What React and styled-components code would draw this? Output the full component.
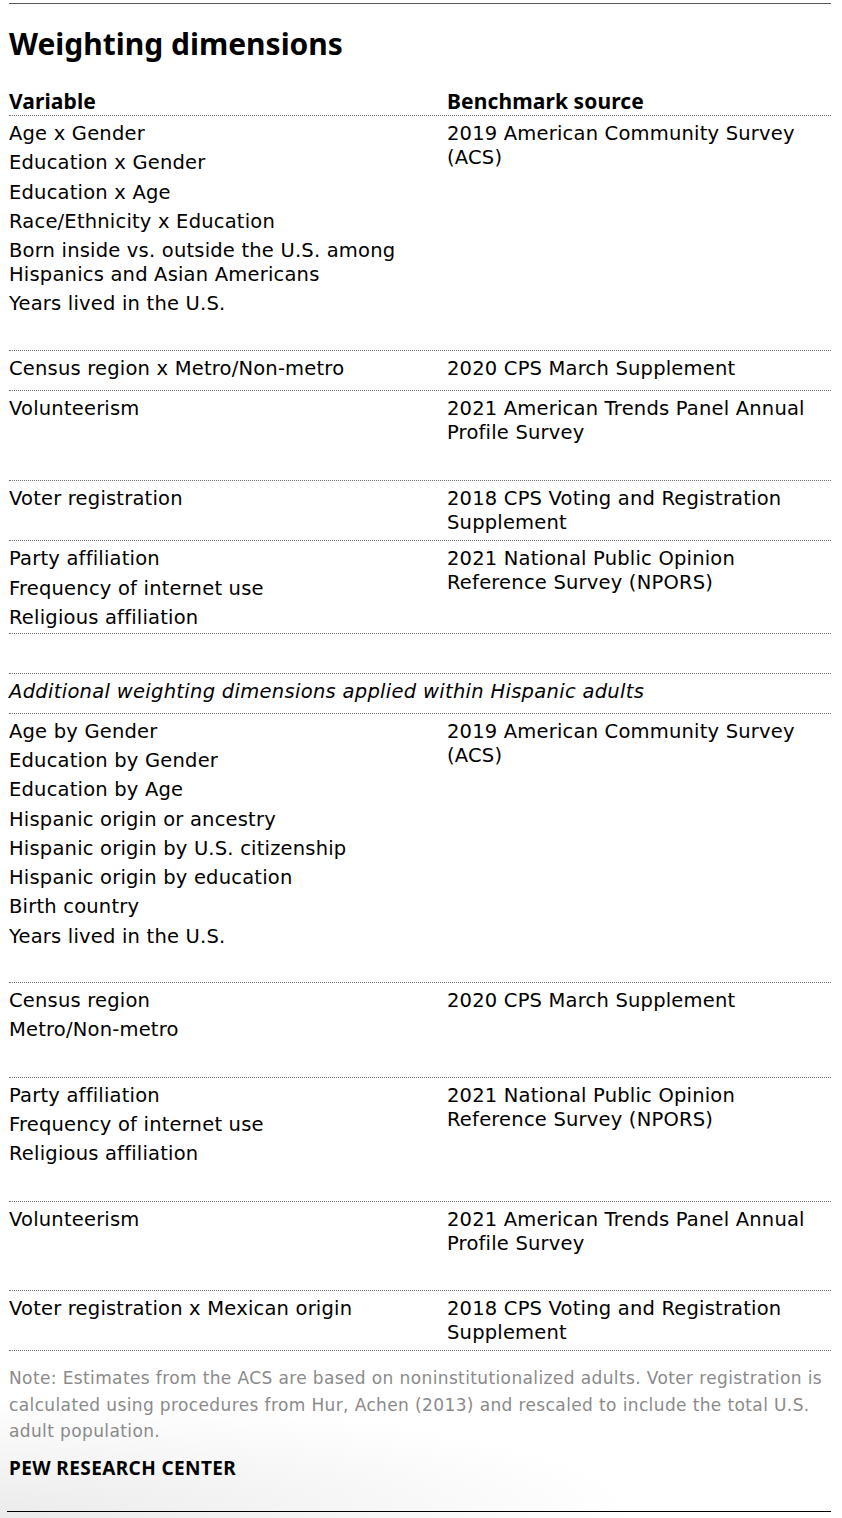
import React from "react";
import styled, { createGlobalStyle } from "styled-components";

const GlobalStyle = createGlobalStyle`
  html, body {
    margin: 0;
    padding: 0;
    background: #fff;
  }
  body {
    font-family: "Noto Sans", "Liberation Sans", Arial, sans-serif;
    color: #000;
  }
`;

const bodyFont = `"DejaVu Sans", "Noto Sans", sans-serif`;

const Page = styled.div`
  box-sizing: border-box;
  min-height: 1518px;
  padding: 3px 11px 0 9px;
  background:
    radial-gradient(ellipse 640px 120px at 0% 100%, #ebebeb 0%, rgba(255, 255, 255, 0) 100%),
    #fff;
`;

const Figure = styled.section`
  border-top: 1px solid #5a5a5a;
`;

const Title = styled.h1`
  margin: 22px 0 0;
  font-size: 30px;
  line-height: 36px;
  font-weight: 700;
`;

const Grid = styled.div`
  display: grid;
  grid-template-columns: 438px 1fr;
  border-bottom: 1px dotted #6f6f6f;
`;

const HeaderRow = styled(Grid)`
  margin-top: 27px;
  padding-bottom: 2px;
`;

const HeadCell = styled.div`
  font-size: 21px;
  line-height: 24px;
  font-weight: 700;
  letter-spacing: 0.1px;
`;

const Row = styled(Grid)`
  padding: 6px 0 ${(p) => p.$pb}px;
`;

const Cell = styled.div`
  display: flex;
  flex-direction: column;
  gap: 5.25px;
`;

const Item = styled.div`
  font-family: ${bodyFont};
  font-size: 19.5px;
  line-height: 24px;
  letter-spacing: 0.2px;
  white-space: nowrap;
`;

const SectionLabel = styled.div`
  grid-column: 1 / -1;
  font-family: ${bodyFont};
  font-size: 19.5px;
  line-height: 24px;
  font-style: italic;
  letter-spacing: 0.3px;
`;

const Spacer = styled.div`
  height: 39px;
  border-bottom: 1px dotted #6f6f6f;
`;

const Note = styled.p`
  margin: 0;
  padding-top: 14px;
  font-family: ${bodyFont};
  font-size: 17px;
  line-height: 26.5px;
  letter-spacing: 0.38px;
  color: #8a8a8a;
  white-space: nowrap;
`;

const Source = styled.div`
  margin-top: 11px;
  font-size: 19px;
  line-height: 24px;
  font-weight: 700;
  letter-spacing: 0.4px;
`;

const BottomRule = styled.div`
  margin: 31px 0 0 -2px;
  border-top: 1px solid #000;
`;

const ACS = [["2019 American Community Survey", "(ACS)"]];
const CPS_MARCH = ["2020 CPS March Supplement"];
const ATP = [["2021 American Trends Panel Annual", "Profile Survey"]];
const CPS_VOTE = [["2018 CPS Voting and Registration", "Supplement"]];
const NPORS = [["2021 National Public Opinion", "Reference Survey (NPORS)"]];

const firstGroups = [
  {
    left: [
      "Age x Gender",
      "Education x Gender",
      "Education x Age",
      "Race/Ethnicity x Education",
      ["Born inside vs. outside the U.S. among", "Hispanics and Asian Americans"],
      "Years lived in the U.S.",
    ],
    right: ACS,
    pb: 34,
  },
  { left: ["Census region x Metro/Non-metro"], right: CPS_MARCH, pb: 9 },
  { left: ["Volunteerism"], right: ATP, pb: 35 },
  { left: ["Voter registration"], right: CPS_VOTE, pb: 5 },
  {
    left: ["Party affiliation", "Frequency of internet use", "Religious affiliation"],
    right: NPORS,
    pb: 3,
  },
];

const hispanicGroups = [
  {
    left: [
      "Age by Gender",
      "Education by Gender",
      "Education by Age",
      "Hispanic origin or ancestry",
      "Hispanic origin by U.S. citizenship",
      "Hispanic origin by education",
      "Birth country",
      "Years lived in the U.S.",
    ],
    right: ACS,
    pb: 33,
  },
  { left: ["Census region", "Metro/Non-metro"], right: CPS_MARCH, pb: 35 },
  {
    left: ["Party affiliation", "Frequency of internet use", "Religious affiliation"],
    right: NPORS,
    pb: 35,
  },
  { left: ["Volunteerism"], right: ATP, pb: 34 },
  { left: ["Voter registration x Mexican origin"], right: CPS_VOTE, pb: 5 },
];

function Entry({ value }) {
  const lines = Array.isArray(value) ? value : [value];
  return (
    <Item>
      {lines.map((l, i) => (
        <React.Fragment key={i}>
          {i > 0 && <br />}
          {l}
        </React.Fragment>
      ))}
    </Item>
  );
}

function Group({ group }) {
  return (
    <Row $pb={group.pb}>
      <Cell>
        {group.left.map((v, i) => (
          <Entry key={i} value={v} />
        ))}
      </Cell>
      <Cell>
        {group.right.map((v, i) => (
          <Entry key={i} value={v} />
        ))}
      </Cell>
    </Row>
  );
}

export default function App() {
  return (
    <>
      <GlobalStyle />
      <Page>
        <Figure>
          <Title>Weighting dimensions</Title>
          <HeaderRow>
            <HeadCell>Variable</HeadCell>
            <HeadCell>Benchmark source</HeadCell>
          </HeaderRow>
          {firstGroups.map((g, i) => (
            <Group key={i} group={g} />
          ))}
          <Spacer />
          <Row $pb={9}>
            <SectionLabel>Additional weighting dimensions applied within Hispanic adults</SectionLabel>
          </Row>
          {hispanicGroups.map((g, i) => (
            <Group key={i} group={g} />
          ))}
          <Note>
            Note: Estimates from the ACS are based on noninstitutionalized adults. Voter registration is
            <br />
            calculated using procedures from Hur, Achen (2013) and rescaled to include the total U.S.
            <br />
            adult population.
          </Note>
          <Source>PEW RESEARCH CENTER</Source>
          <BottomRule />
        </Figure>
      </Page>
    </>
  );
}
